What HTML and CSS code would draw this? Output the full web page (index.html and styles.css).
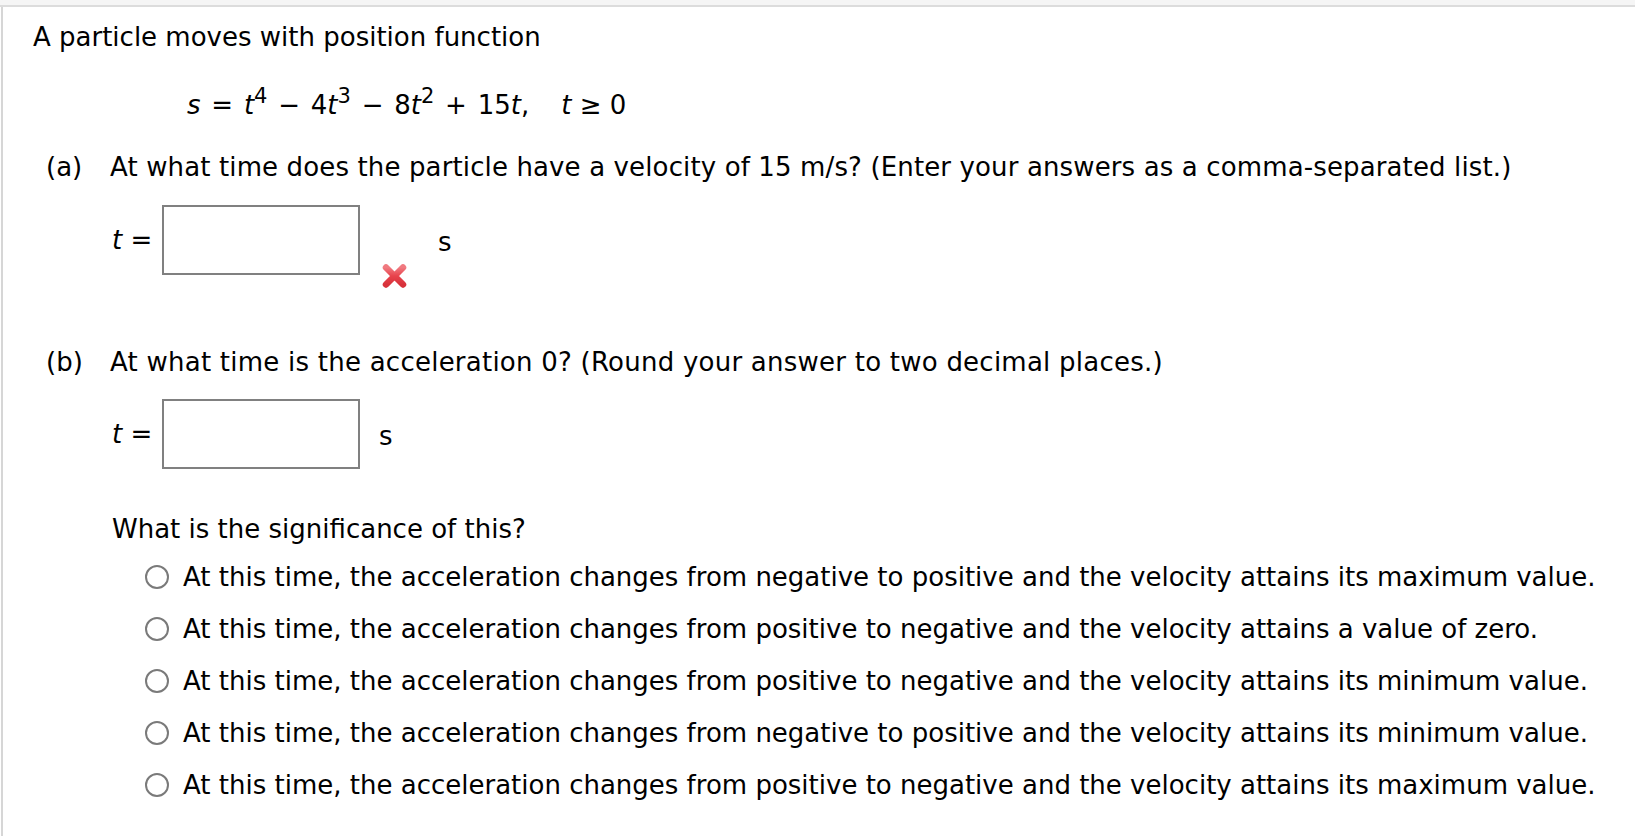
FILE: index.html
```html
<!DOCTYPE html>
<html>
<head>
<meta charset="utf-8">
<link rel="stylesheet" href="styles.css">
</head>
<body>
<div class="topbar"></div>
<div class="panel">
  <p class="intro">A particle moves with position function</p>
  <div class="eq"><i>s</i> = <i>t</i><sup>4</sup> − 4<i>t</i><sup>3</sup> − 8<i>t</i><sup>2</sup> + 15<i>t</i>,<span class="cond"><i>t</i> ≥ 0</span></div>

  <div class="part part-a"><span class="lbl">(a)</span><span class="q">At what time does the particle have a velocity of 15 m/s? (Enter your answers as a comma-separated list.)</span></div>
  <div class="answer answer-a">
    <span class="var"><i>t</i> =</span>
    <span class="box"></span>
    <span class="mark">
      <svg width="27" height="26" viewBox="0 0 27 26">
        <defs>
          <linearGradient id="xg" x1="0" y1="0" x2="0" y2="1">
            <stop offset="0" stop-color="#f07a80"/>
            <stop offset="0.5" stop-color="#e8434c"/>
            <stop offset="1" stop-color="#d8323b"/>
          </linearGradient>
        </defs>
        <path d="M5 4.5 L22 21.5 M22 4.5 L5 21.5" stroke="url(#xg)" stroke-width="6.5" stroke-linecap="round" fill="none"/>
      </svg>
    </span>
    <span class="unit">s</span>
  </div>

  <div class="part part-b"><span class="lbl">(b)</span><span class="q">At what time is the acceleration 0? (Round your answer to two decimal places.)</span></div>
  <div class="answer answer-b">
    <span class="var"><i>t</i> =</span>
    <span class="box"></span>
    <span class="unit unit-b">s</span>
  </div>

  <p class="sig">What is the significance of this?</p>
  <ul class="choices">
    <li><span class="radio"></span>At this time, the acceleration changes from negative to positive and the velocity attains its maximum value.</li>
    <li><span class="radio"></span>At this time, the acceleration changes from positive to negative and the velocity attains a value of zero.</li>
    <li><span class="radio"></span>At this time, the acceleration changes from positive to negative and the velocity attains its minimum value.</li>
    <li><span class="radio"></span>At this time, the acceleration changes from negative to positive and the velocity attains its minimum value.</li>
    <li><span class="radio"></span>At this time, the acceleration changes from positive to negative and the velocity attains its maximum value.</li>
  </ul>
</div>
</body>
</html>
```
FILE: styles.css
```css
html, body {
  margin: 0;
  padding: 0;
  background: #ffffff;
}
body {
  font-family: "DejaVu Sans", Verdana, sans-serif;
  font-size: 26px;
  color: #000;
  line-height: 36px;
}
.topbar {
  height: 5px;
  background: #f5f5f5;
  border-bottom: 2px solid #dcdcdc;
}
.panel {
  margin-left: 1px;
  border-left: 2px solid #d6d6d6;
  height: 829px;
  box-sizing: border-box;
  padding-top: 12px;
}
.intro {
  margin: 0 0 0 30px;
}
.eq {
  margin: 32px 0 0 184px;
  white-space: pre;
  word-spacing: 2.5px;
}
.eq sup {
  font-size: 21px;
  line-height: 0;
  vertical-align: 11px;
}
.eq .cond {
  margin-left: 32px;
  word-spacing: 0;
}
.part {
  display: flex;
  margin-left: 43px;
}
.part .lbl {
  width: 64px;
}
.part-a {
  margin-top: 26px;
}
.part-a .q {
  letter-spacing: 0.13px;
}
.part-b {
  margin-top: 69px;
}
.part-b .q {
  letter-spacing: 0.24px;
}
.answer {
  display: flex;
  align-items: center;
  margin-left: 109px;
  height: 70px;
}
.answer-a {
  margin-top: 20px;
}
.answer-b {
  margin-top: 19px;
}
.var {
  width: 50px;
}
.box {
  width: 198px;
  height: 70px;
  box-sizing: border-box;
  border: 2px solid #808080;
  background: #fff;
}
.mark {
  align-self: flex-end;
  margin: 0 0 -14px 21px;
  height: 26px;
  display: flex;
}
.unit {
  margin-left: 30px;
  margin-top: 4px;
}
.unit-b {
  margin-left: 19px;
}
.sig {
  margin: 42px 0 0 109px;
}
.choices {
  list-style: none;
  margin: 4px 0 0 142px;
  padding: 0;
}
.choices li {
  display: flex;
  align-items: center;
  height: 52px;
}
.radio {
  width: 24px;
  height: 24px;
  box-sizing: border-box;
  border: 2px solid #7a7a7a;
  border-radius: 50%;
  margin-right: 14px;
  flex: none;
}
```
